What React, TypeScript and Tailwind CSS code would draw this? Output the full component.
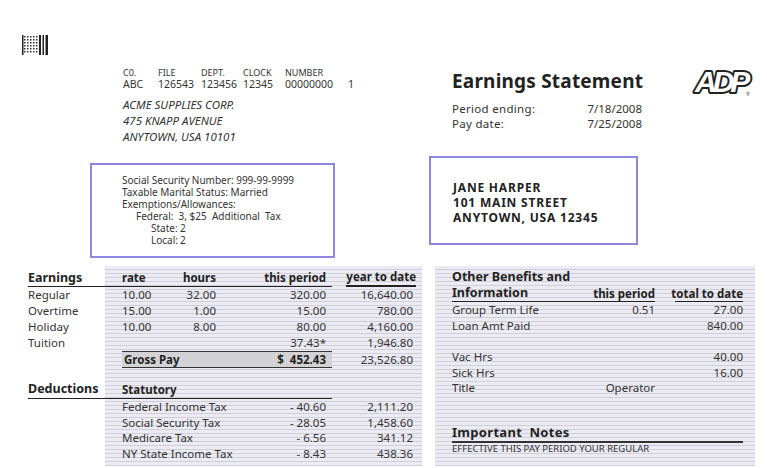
const stripes =
  "bg-[repeating-linear-gradient(180deg,#ecebf3_0px,#ecebf3_3px,#cfcfd8_3px,#cfcfd8_4px)]";

function Barcode() {
  const dots = [];
  for (let r = 0; r < 6; r++)
    for (let c = 0; c < 5; c++)
      dots.push(<rect key={`${r}-${c}`} x={2 + c * 3} y={1 + r * 3} width="1.5" height="1.5" fill="#333" />);
  return (
    <svg width="28" height="20" viewBox="0 0 28 20">
      <rect x="0" y="0" width="1.5" height="20" fill="#222" />
      {dots}
      <rect x="17" y="0" width="2" height="20" fill="#222" />
      <rect x="20.5" y="0" width="1.5" height="20" fill="#222" />
      <rect x="23.5" y="0" width="2.5" height="20" fill="#222" />
    </svg>
  );
}

function AdpLogo() {
  return (
    <svg width="62" height="32" viewBox="0 0 62 32">
      <text
        x="3"
        y="27"
        fontFamily="'Liberation Sans', sans-serif"
        fontWeight="900"
        fontStyle="italic"
        fontSize="30"
        fill="#fff"
        stroke="#222"
        strokeWidth="4"
        strokeLinejoin="round"
        paintOrder="stroke"
        letterSpacing="-4"
      >
        ADP
      </text>
      <text x="54" y="31" fontSize="5" fill="#222" fontFamily="'Liberation Sans', sans-serif">®</text>
    </svg>
  );
}

type Row = { label?: string; rate?: string; hours?: string; period?: string; ytd?: string };

const EARNINGS: Row[] = [
  { label: "Regular", rate: "10.00", hours: "32.00", period: "320.00", ytd: "16,640.00" },
  { label: "Overtime", rate: "15.00", hours: "1.00", period: "15.00", ytd: "780.00" },
  { label: "Holiday", rate: "10.00", hours: "8.00", period: "80.00", ytd: "4,160.00" },
  { label: "Tuition", period: "37.43*", ytd: "1,946.80" },
];

const DEDUCTIONS = [
  ["Federal Income Tax", "- 40.60", "2,111.20"],
  ["Social Security Tax", "- 28.05", "1,458.60"],
  ["Medicare Tax", "- 6.56", "341.12"],
  ["NY State Income Tax", "- 8.43", "438.36"],
];

function EarnRow({ r }: { r: Row }) {
  return (
    <div className="flex h-[16px] items-center text-[11.5px] text-[#333]">
      <div className="w-[94px]">{r.label}</div>
      <div className="w-[48px]">{r.rate}</div>
      <div className="w-[46px] text-right">{r.hours}</div>
      <div className="w-[110px] text-right">{r.period}</div>
      <div className="w-[87px] text-right">{r.ytd}</div>
    </div>
  );
}

function InfoRow({ a, b, c }: { a?: string; b?: string; c?: string }) {
  return (
    <div className="flex h-[15.5px] items-center text-[11.5px] text-[#333]">
      <div className="w-[108px]">{a}</div>
      <div className="w-[95px] text-right">{b}</div>
      <div className="w-[88px] text-right">{c}</div>
    </div>
  );
}

export default function App() {
  return (
    <div className="relative w-[767px] h-[468px] overflow-hidden whitespace-nowrap bg-white font-['Liberation_Sans'] text-[#222]">
      {/* top */}
      <div className="pl-[22px] pt-[35px]">
        <Barcode />
      </div>
      <div className="flex mt-[12px]">
        <div className="ml-[123px] w-[329px]">
          <div className="flex text-[9px] leading-[11px] text-[#333]">
            <span className="w-[35px]">C0.</span>
            <span className="w-[43px]">FILE</span>
            <span className="w-[42px]">DEPT.</span>
            <span className="w-[42px]">CLOCK</span>
            <span>NUMBER</span>
          </div>
          <div className="flex text-[10.5px] leading-[13px] text-[#333]">
            <span className="w-[35px]">ABC</span>
            <span className="w-[43px]">126543</span>
            <span className="w-[42px]">123456</span>
            <span className="w-[42px]">12345</span>
            <span className="w-[63px]">00000000</span>
            <span>1</span>
          </div>
          <div className="mt-[6px] italic text-[11.5px] leading-[16px] text-[#333]">
            <div>ACME SUPPLIES CORP.</div>
            <div>475 KNAPP AVENUE</div>
            <div>ANYTOWN, USA 10101</div>
          </div>
        </div>
        <div className="w-[190px] pt-[3px]">
          <div className="font-bold text-[19px] leading-[22px] tracking-[0.2px]">Earnings Statement</div>
          <div className="mt-[9px] text-[11.5px] leading-[15px] text-[#333]">
            <div className="flex justify-between"><span className="tracking-[0.3px]">Period ending:</span><span>7/18/2008</span></div>
            <div className="flex justify-between"><span className="tracking-[0.3px]">Pay date:</span><span>7/25/2008</span></div>
          </div>
        </div>
        <div className="ml-[50px] -mt-[2px]">
          <AdpLogo />
        </div>
      </div>

      {/* boxes */}
      <div className="flex mt-[11px]">
        <div className="ml-[90px] mt-[7px] w-[245px] h-[95px] border-2 border-[#8c88e2] pl-[30px] pt-[9px] text-[10px] leading-[12px] text-[#333]">
          <div>Social Security Number: 999-99-9999</div>
          <div>Taxable Marital Status: Married</div>
          <div>Exemptions/Allowances:</div>
          <div className="pl-[14px]">Federal:&nbsp; 3, $25&nbsp; Additional&nbsp; Tax</div>
          <div className="pl-[29px] flex"><span className="w-[29px]">State:</span><span>2</span></div>
          <div className="pl-[29px] flex"><span className="w-[29px]">Local:</span><span>2</span></div>
        </div>
        <div className="ml-[94px] w-[209px] h-[89px] border-2 border-[#8c88e2] pl-[22px] pt-[22px] font-bold text-[12px] leading-[15px] tracking-[0.8px] text-[#222]">
          <div>JANE HARPER</div>
          <div>101 MAIN STREET</div>
          <div>ANYTOWN, USA 12345</div>
        </div>
      </div>

      {/* bottom tables */}
      <div className="relative flex mt-[8px] h-[200px]">
        <div className={`absolute left-[105px] top-0 w-[317px] h-full ${stripes}`} />
        <div className={`absolute left-[435px] top-0 w-[320px] h-full ${stripes}`} />

        <div className="relative ml-[28px] w-[394px] pt-[3px]">
          <div className="flex h-[18px] items-center font-bold text-[11.5px] text-[#222]">
            <div className="w-[94px] text-[12.5px]">Earnings</div>
            <div className="w-[48px]">rate</div>
            <div className="w-[46px] text-right">hours</div>
            <div className="w-[116px] h-full flex items-center justify-end pr-[6px] border-b border-[#222]">this period</div>
          </div>
          <div className="absolute left-0 top-[20px] w-[188px] border-b border-[#222]" />
          <div className="absolute left-[318px] top-[3px] w-[70px] h-[18px] flex items-center justify-end font-bold text-[11.5px] border-b-2 border-[#222]">year to date</div>
          {EARNINGS.map((r) => (
            <EarnRow key={r.label} r={r} />
          ))}
          <div className="flex h-[17px] items-center text-[11.5px] text-[#333]">
            <div className="w-[94px]" />
            <div className="w-[210px] h-full flex items-center justify-between px-[2px] pr-[6px] bg-[#d3d3d5] border-y border-[#333] font-bold text-[#222]">
              <span>Gross Pay</span>
              <span>$&nbsp; 452.43</span>
            </div>
            <div className="w-[81px] text-right">23,526.80</div>
          </div>
          <div className="h-[13px]" />
          <div className="flex h-[18px] items-center font-bold text-[12.5px] border-b border-[#222] w-[304px]">
            <div className="w-[94px]">Deductions</div>
            <div className="text-[11.5px]">Statutory</div>
          </div>
          {DEDUCTIONS.map(([a, b, c]) => (
            <div key={a} className="flex h-[15.5px] items-center text-[11.5px] text-[#333]">
              <div className="w-[94px]" />
              <div className="w-[150px]">{a}</div>
              <div className="w-[54px] text-right">{b}</div>
              <div className="w-[87px] text-right">{c}</div>
            </div>
          ))}
        </div>

        <div className="relative ml-[30px] w-[291px] pt-[3px]">
          <div className="h-[17px] flex items-center font-bold text-[12.5px]">Other Benefits and</div>
          <div className="flex h-[16px] items-center font-bold text-[12px]">
            <div className="w-[203px] h-full flex items-center justify-between border-b border-[#222]">
              <span className="text-[12.5px]">Information</span>
              <span className="text-[11.5px]">this period</span>
            </div>
            <div className="ml-[20px] w-[68px] h-full flex items-center justify-end border-b border-[#222] text-[11.5px]">total to date</div>
          </div>
          <InfoRow a="Group Term Life" b="0.51" c="27.00" />
          <InfoRow a="Loan Amt Paid" c="840.00" />
          <div className="h-[16px]" />
          <InfoRow a="Vac  Hrs" c="40.00" />
          <InfoRow a="Sick Hrs" c="16.00" />
          <InfoRow a="Title" b="Operator" />
          <div className="h-[29px]" />
          <div className="h-[18px] flex items-center font-bold text-[13px] border-b-2 border-[#333] w-[291px] tracking-[0.3px]">Important&nbsp; Notes</div>
          <div className="h-[14px] flex items-center text-[9.5px] text-[#333]">EFFECTIVE THIS PAY PERIOD YOUR REGULAR</div>
        </div>
      </div>
    </div>
  );
}
